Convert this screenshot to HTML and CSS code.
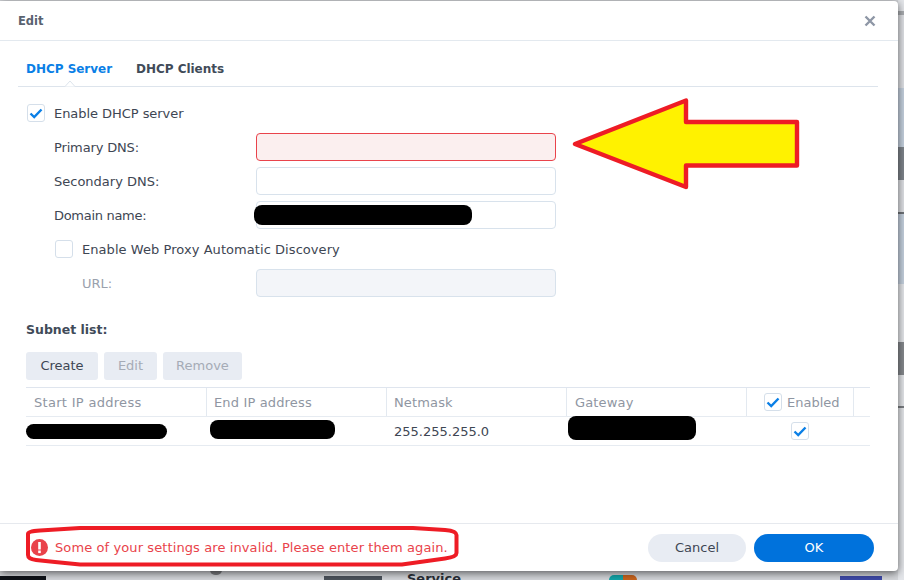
FILE: index.html
```html
<!DOCTYPE html>
<html lang="en">
<head>
<meta charset="utf-8">
<title>Edit</title>
<link rel="stylesheet" href="styles.css">
</head>
<body>
<div class="backdrop">
  <i class="bg-right"></i>
  <i class="bg-strip s1"></i><i class="bg-strip s2"></i><i class="bg-strip s3"></i><i class="bg-strip s5"></i><i class="bg-strip s6"></i><i class="bg-strip s7"></i>
  <span class="bg-text">Service</span>
</div>
<main class="dialog">
  <header class="titlebar">
    <h1>Edit</h1>
    <svg class="close" width="12" height="12" viewBox="0 0 12 12"><path d="M1.500 1.500l9 9M10.500 1.500l-9 9" stroke="#8e97a6" stroke-width="2.400" fill="none"/></svg>
  </header>
  <nav class="tabs">
    <span class="tab active">DHCP Server</span>
    <span class="tab">DHCP Clients</span>
    <svg class="tab-notch" width="12" height="7" viewBox="0 0 12 7"><path d="M0 6.500h1L6 1l5 5.500h1" fill="#fff" stroke="#dde4ec"/></svg>
  </nav>
  <section class="form">
    <label class="check-row first"><span class="cb on"><svg width="14" height="11" viewBox="0 0 14 11"><path d="M1.500 5.500l3.700 3.500L12.500 1.500" fill="none" stroke="#0a7fe6" stroke-width="2.400"/></svg></span>Enable DHCP server</label>
    <div class="field"><span class="lbl lbl-primary">Primary DNS:</span><span class="input invalid"></span></div>
    <div class="field"><span class="lbl">Secondary DNS:</span><span class="input"></span></div>
    <div class="field"><span class="lbl lbl-domain">Domain name:</span><span class="input"><i class="scribble s-domain"></i></span></div>
    <label class="check-row sub"><span class="cb"></span>Enable Web Proxy Automatic Discovery</label>
    <div class="field"><span class="lbl url">URL:</span><span class="input disabled"></span></div>
  </section>
  <section class="subnets">
    <h2>Subnet list:</h2>
    <div class="toolbar">
      <span class="btn b-create">Create</span>
      <span class="btn b-edit off">Edit</span>
      <span class="btn b-remove off">Remove</span>
    </div>
    <div class="grid">
      <div class="row head">
        <span class="cell wide">Start IP address</span>
        <span class="cell tight">End IP address</span>
        <span class="cell tight">Netmask</span>
        <span class="cell">Gateway</span>
        <span class="cell en"><span class="cb on"><svg width="14" height="11" viewBox="0 0 14 11"><path d="M1.500 5.500l3.700 3.500L12.500 1.500" fill="none" stroke="#0a7fe6" stroke-width="2.400"/></svg></span>Enabled</span>
        <span class="cell"></span>
      </div>
      <div class="row body">
        <span class="cell"><i class="scribble s-start"></i></span>
        <span class="cell"><i class="scribble s-end"></i></span>
        <span class="cell tight val">255.255.255.0</span>
        <span class="cell"><i class="scribble s-gw"></i></span>
        <span class="cell en mid"><span class="cb on"><svg width="14" height="11" viewBox="0 0 14 11"><path d="M1.500 5.500l3.700 3.500L12.500 1.500" fill="none" stroke="#0a7fe6" stroke-width="2.400"/></svg></span></span>
        <span class="cell"></span>
      </div>
    </div>
  </section>
  <footer class="foot">
    <div class="status">
      <svg width="17" height="17" viewBox="0 0 17 17"><circle cx="8.500" cy="8.500" r="8.500" fill="#e9434b"/><rect x="7.200" y="3" width="2.600" height="7.500" fill="#fff"/><rect x="7.200" y="11.500" width="2.600" height="2.600" fill="#fff"/></svg>
      <span>Some of your settings are invalid. Please enter them again.</span>
    </div>
    <div class="actions">
      <span class="pill">Cancel</span>
      <span class="pill ok">OK</span>
    </div>
  </footer>
</main>
<svg class="annot arrow" width="232" height="97" viewBox="0 0 232 97"><path d="M5 49L116 5.500V27H227V70.500H116V92Z" fill="#fff200" stroke="#ee1c25" stroke-width="4.400" stroke-linejoin="round"/></svg>
<svg class="annot ring" width="440" height="44" viewBox="24 524 440 44"><path d="M28 534Q28 531 40 530.500L80 528H413L445 530Q456.500 531 456.500 535V553Q456.500 557 445 558.500L402 564.500H80L55 562L36 560Q28 559 28 555Z" fill="none" stroke="#ee1c25" stroke-width="4"/></svg>
</body>
</html>
```
FILE: styles.css
```css
* { box-sizing: border-box; }
html, body { margin: 0; height: 100%; overflow: hidden; }
body {
  width: 904px; height: 580px; position: relative; background: #fff;
  font-family: "DejaVu Sans", Verdana, sans-serif; font-size: 13px; color: #3e4653;
}
.backdrop { position: absolute; inset: 0; background: #d4d6da; overflow: hidden; }
.bg-right {
  position: absolute; left: 898px; top: 0; width: 6px; height: 580px;
  background: linear-gradient(to bottom,
    #e4e6ea 0 11px, #a9acb0 11px 15px, #dfe1e5 15px 88px,
    #c4d0de 88px 147px, #7e848b 147px 180px, #dfe1e5 180px 212px,
    #6e7277 212px 214px, #c4d0de 214px 284px, #e4e6ea 284px 342px,
    #85888d 342px 375px, #e4e6ea 375px 406px, #7b7e83 406px 408px,
    #e4e6ea 408px 580px);
}
.bg-strip { position: absolute; display: block; }
.s1 { left: 0; top: 576px; width: 46px; height: 4px; background: #0e1218; }
.s2 { left: 324px; top: 576px; width: 58px; height: 4px; background: #4c535c; }
.s3 { left: 840px; top: 576px; width: 42px; height: 4px; background: #3e4aa8; }
.s5 { left: 609px; top: 575px; width: 14px; height: 5px; background: #13a5a8; border-radius: 5px 0 0 0; }
.s6 { left: 623px; top: 575px; width: 14px; height: 5px; background: #c8641e; border-radius: 0 5px 0 0; }
.s7 { left: 210px; top: 570px; width: 12px; height: 5px; background: #7d7f83; border-radius: 0 0 6px 6px; }
.bg-text { position: absolute; left: 407px; top: 571px; font-weight: 700; color: #2a2f38; }
.dialog {
  position: absolute; left: 0; top: 1px; width: 898px; height: 570px;
  background: #fff; border-radius: 0 4px 4px 0;
  box-shadow: 0 2px 9px rgba(0,0,0,.6);
  display: flex; flex-direction: column;
}
.titlebar { height: 40px; flex: none; border-bottom: 1px solid #e3e9ef; display: flex; align-items: center; justify-content: space-between; padding: 0 22px 0 18px; }
.titlebar h1 { margin: 0; font-size: 11.500px; font-weight: 700; color: #596270; }
.tabs { position: relative; margin: 0 20px 0 18px; height: 46px; flex: none; border-bottom: 1px solid #dde4ec; display: flex; align-items: center; gap: 24px; padding: 11px 8px 0; }
.tab { font-weight: 700; font-size: 12px; letter-spacing: -.03px; color: #414b59; }
.tab.active { color: #0a7fe6; }
.tab-notch { position: absolute; left: 46px; bottom: -1px; }
.form { padding: 12px 0 0 27px; display: flex; flex-direction: column; flex: none; }
.check-row { height: 28px; display: flex; align-items: center; gap: 9px; }
.check-row.first { letter-spacing: -.05px; }
.check-row.sub { margin: 6px 0 0 28px; letter-spacing: .06px; }
.cb { width: 18px; height: 18px; flex: none; background: #fff; border: 1px solid #d5dfea; border-radius: 3px; display: inline-flex; align-items: center; justify-content: center; letter-spacing: 0; }
.field { height: 28px; margin-top: 6px; display: flex; align-items: center; }
.lbl { width: 229px; padding-left: 27px; }
.lbl-primary { letter-spacing: -.15px; }
.lbl-domain { letter-spacing: -.3px; }
.lbl.url { padding-left: 55px; color: #9aa1ad; }
.input { position: relative; width: 300px; height: 28px; background: #fff; border: 1px solid #d8e2ec; border-radius: 4px; }
.input.invalid { background: #fbefef; border-color: #e9434b; }
.input.disabled { background: #f3f5f9; }
.scribble { position: absolute; display: block; background: #000; border-radius: 8px; }
.s-domain { left: -3px; top: 3px; width: 218px; height: 20px; }
.subnets { padding: 0 28px 0 26px; margin-top: 25px; flex: none; }
.subnets h2 { margin: 0; font-size: 12.500px; font-weight: 700; color: #414b59; line-height: 16px; }
.toolbar { display: flex; gap: 6px; margin-top: 14px; }
.btn { height: 28px; background: #e8ecf3; border-radius: 3px; line-height: 28px; color: #3e4653; text-align: center; }
.b-create { width: 72px; }
.b-edit { width: 53px; }
.b-remove { width: 79px; }
.btn.off { color: #a5abb6; }
.grid { margin-top: 7px; border-top: 1px solid #dfe5ee; }
.row { display: grid; grid-template-columns: 181px 180px 180px 180px 107px 16px; height: 29px; border-bottom: 1px solid #e6ebf1; align-items: stretch; }
.cell { display: flex; align-items: center; padding-left: 8px; position: relative; border-right: 1px solid #e3e9f0; color: #8f96a2; gap: 5px; min-width: 0; letter-spacing: .15px; }
.cell.tight { padding-left: 7px; }
.cell.wide { letter-spacing: .3px; }
.cell:last-child { border-right: 0; }
.row.body .cell { border-right: 0; }
.row.head .cell.en { padding-left: 17px; letter-spacing: 0; }
.cell.val { color: #3e4653; letter-spacing: 0; }
.cell.mid { justify-content: center; padding: 0 1px 0 0; }
.s-start { left: 0; top: 7px; width: 141px; height: 15px; }
.s-end { left: 3px; top: 3px; width: 125px; height: 19px; }
.s-gw { left: 1px; top: -1px; width: 128px; height: 24px; }
.foot { margin-top: auto; height: 48px; flex: none; border-top: 1px solid #e6e9ee; display: flex; align-items: center; justify-content: space-between; padding: 0 24px 0 31px; }
.status { display: flex; align-items: center; gap: 7px; color: #e9434b; letter-spacing: .1px; }
.actions { display: flex; gap: 8px; }
.pill { width: 98px; height: 28px; border-radius: 14px; background: #e8ecf3; text-align: center; line-height: 28px; }
.pill.ok { width: 120px; background: #0072dc; color: #fff; }
.annot { position: absolute; overflow: visible; }
.arrow { left: 570px; top: 95px; }
.ring { left: 24px; top: 524px; }
```
